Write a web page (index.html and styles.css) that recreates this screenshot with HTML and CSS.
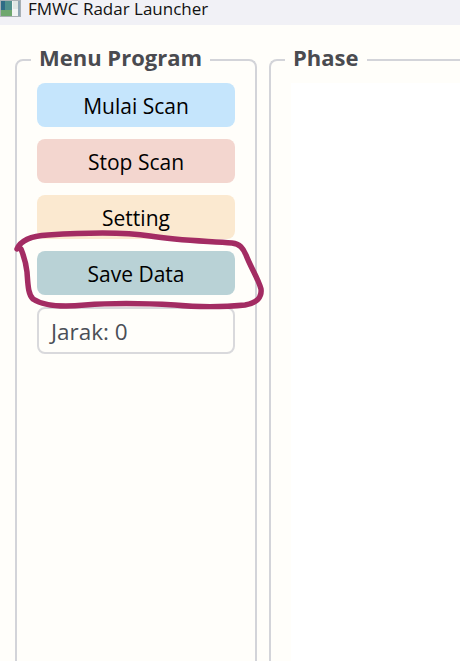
FILE: index.html
```html
<!DOCTYPE html>
<html lang="en">
<head>
    <meta charset="UTF-8">
    <title>FMWC Radar Launcher</title>
    <link rel="stylesheet" href="styles.css">
</head>
<body>
    <div class="title-bar">
        <svg class="app-icon" viewBox="0 0 22 17" width="22" height="17">
            <rect x="0.5" y="0.5" width="20" height="16" fill="#f2f4f4" stroke="#a9b0b5"/>
            <rect x="1" y="1" width="11" height="15" fill="#4f8f8c"/>
            <rect x="1" y="10" width="11" height="6" fill="#6fa86f"/>
            <rect x="1" y="1" width="4" height="9" fill="#2f6b86"/>
            <rect x="13" y="1" width="5" height="8" fill="#dfe6e4"/>
            <rect x="18" y="1" width="2" height="15" fill="#8fa6b5"/>
        </svg>
        <span class="title-text">FMWC Radar Launcher</span>
    </div>
    <div class="content">
        <fieldset class="group menu-group">
            <legend>Menu Program</legend>
            <button class="btn btn-start">Mulai Scan</button>
            <button class="btn btn-stop">Stop Scan</button>
            <button class="btn btn-setting">Setting</button>
            <button class="btn btn-save">Save Data</button>
            <div class="distance">Jarak: 0</div>
        </fieldset>
        <fieldset class="group phase-group">
            <legend>Phase</legend>
            <div class="plot"></div>
        </fieldset>
    </div>
    <!-- hand drawn mark around the save button -->
    <svg class="scribble" viewBox="0 0 460 661" width="460" height="661">
        <path d="M17 249 C20 242 28 236 48 235 C80 233 125 232 150 236 C180 241 210 241 232 243 C240 244 243 248 246 255 C251 268 258 278 261 289 C262 297 257 303 245 305 C225 307 195 307 175 305 C140 303 110 303 85 305 C65 307 45 307 33 299 C28 294 28 285 27 272 C26 262 23 254 21 249"/>
    </svg>
</body>
</html>
```

FILE: styles.css
```css
* {
    box-sizing: border-box;
}
html, body {
    margin: 0;
    height: 661px;
    overflow: hidden;
}
body {
    position: relative;
    width: 460px;
    background-color: #fffefa;
    font-family: "Open Sans", "Noto Sans", sans-serif;
}
.title-bar {
    height: 25px;
    display: flex;
    align-items: flex-start;
    gap: 6px;
    background-color: #f1f1f6;
}
.app-icon {
    flex: none;
}
.title-text {
    font-size: 17px;
    line-height: 17px;
    color: #111;
}
.content {
    display: flex;
    gap: 12px;
    padding: 19px 0 0 15px;
}
.group {
    margin: 0;
    padding: 0;
    border: 2px solid #d3d4d9;
    border-bottom: none;
    border-radius: 8px 8px 0 0;
    min-width: 0;
    height: 617px;
}
.group legend {
    padding: 0 8px 6px;
    font-size: 22px;
    line-height: 26px;
    font-weight: 700;
    color: #4a4b50;
}
.menu-group {
    flex: none;
    width: 242px;
    display: flex;
    flex-direction: column;
    gap: 12px;
    padding: 7px 20px 0 20px;
}
.menu-group legend {
    margin-left: -6px;
}
.phase-group {
    flex: none;
    width: 191px;
    padding: 7px 0 0 20px;
    border-right: none;
    border-radius: 8px 0 0 0;
}
.phase-group legend {
    margin-left: -6px;
}
.btn {
    display: block;
    width: 198px;
    height: 44px;
    flex: none;
    padding: 2px 0 0;
    border: none;
    border-radius: 8px;
    font-family: inherit;
    font-size: 21px;
    color: #000;
}
.btn-start {
    background-color: #c5e5fc;
}
.btn-stop {
    background-color: #f3d6cf;
}
.btn-setting {
    background-color: #fbe9d0;
}
.btn-save {
    background-color: #b9d2d6;
}
.distance {
    width: 198px;
    height: 47px;
    padding-left: 12px;
    border: 2px solid #d9d9dc;
    border-radius: 8px;
    font-size: 22.5px;
    line-height: 45px;
    color: #4a4f57;
}
.plot {
    height: 578px;
    background-color: #fff;
}
.scribble {
    position: absolute;
    top: 0;
    left: 0;
}
.scribble path {
    fill: none;
    stroke: #a32c63;
    stroke-width: 5.5;
    stroke-linecap: round;
    stroke-linejoin: round;
}
```
